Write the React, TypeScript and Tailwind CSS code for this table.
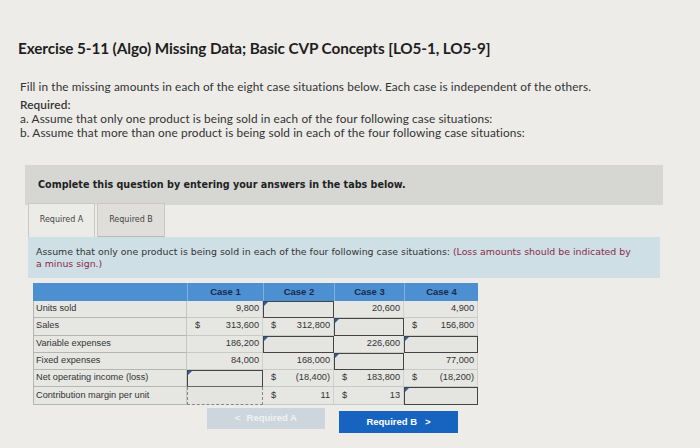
type Cell =
  | { kind: 'val'; v: string; d?: boolean }
  | { kind: 'in'; dotted?: 'top' | 'all' }

const ROWS: { label: string; cells: Cell[] }[] = [
  { label: 'Units sold', cells: [{ kind: 'val', v: '9,800' }, { kind: 'in' }, { kind: 'val', v: '20,600' }, { kind: 'val', v: '4,900' }] },
  { label: 'Sales', cells: [{ kind: 'val', v: '313,600', d: true }, { kind: 'val', v: '312,800', d: true }, { kind: 'in' }, { kind: 'val', v: '156,800', d: true }] },
  { label: 'Variable expenses', cells: [{ kind: 'val', v: '186,200' }, { kind: 'in' }, { kind: 'val', v: '226,600' }, { kind: 'in' }] },
  { label: 'Fixed expenses', cells: [{ kind: 'val', v: '84,000' }, { kind: 'val', v: '168,000' }, { kind: 'in' }, { kind: 'val', v: '77,000' }] },
  { label: 'Net operating income (loss)', cells: [{ kind: 'in', dotted: 'top' }, { kind: 'val', v: '(18,400)', d: true }, { kind: 'val', v: '183,800', d: true }, { kind: 'val', v: '(18,200)', d: true }] },
  { label: 'Contribution margin per unit', cells: [{ kind: 'in', dotted: 'all' }, { kind: 'val', v: '11', d: true }, { kind: 'val', v: '13', d: true }, { kind: 'in' }] },
]

const COLS = ['w-[76px]', 'w-[71px]', 'w-[70px]', 'w-[74px]']

function TableCell({ cell, w }: { cell: Cell; w: string }) {
  if (cell.kind === 'in') {
    const border =
      cell.dotted === 'top'
        ? 'border border-[#444] border-b-dashed border-b-[#666]'
        : cell.dotted === 'all'
          ? 'border border-dashed border-[#888] border-t-0'
          : 'border border-[#444]'
    return (
      <div className={`${w} h-[17.3px] relative bg-[#e4e4e1] ${border}`}>
        {cell.dotted !== 'all' && (
          <span className="absolute left-0 top-0 w-0 h-0 border-t-[4px] border-r-[4px] border-t-[#2a5fa8] border-r-transparent" />
        )}
      </div>
    )
  }
  return (
    <div className={`${w} h-[17.3px] flex items-center justify-between pl-[8px] pr-[3px] bg-[#e6e6e3] border-b border-[#c9c9c6] border-r border-r-[#d0d0cc]`}>
      <span>{cell.d ? '$' : ''}</span>
      <span>{cell.v}</span>
    </div>
  )
}

export default function App() {
  return (
    <div className="w-[700px] h-[448px] overflow-hidden bg-[#edece9] text-[#2a2a2a]" style={{ fontFamily: 'Lato, "Open Sans", sans-serif' }}>
      {/* Header */}
      <div className="pl-[18px] pt-[37px]">
        <h1 className="text-[15.3px] font-bold text-[#1e1e1e] tracking-[-0.1px]">
          Exercise 5-11 (Algo) Missing Data; Basic CVP Concepts [LO5-1, LO5-9]
        </h1>
      </div>

      <div className="pl-[20px] pt-[20px] text-[11.8px] leading-[14px] tracking-[0.1px] text-[#333]">
        <p>Fill in the missing amounts in each of the eight case situations below. Each case is independent of the others.</p>
        <p className="mt-[4px] font-semibold">Required:</p>
        <p>a. Assume that only one product is being sold in each of the four following case situations:</p>
        <p>b. Assume that more than one product is being sold in each of the four following case situations:</p>
      </div>

      {/* Instructions box */}
      <div className="ml-[25px] mt-[25px] w-[638px] h-[40px] bg-[#d6d6d3] flex items-center pl-[13px]">
        <span className="text-[9.6px] font-bold text-[#222]" style={{ fontFamily: '"DejaVu Sans", Verdana, sans-serif' }}>
          Complete this question by entering your answers in the tabs below.
        </span>
      </div>

      {/* Tabs */}
      <div className="ml-[28px] mt-[-2px] flex gap-[2px]" style={{ fontFamily: '"DejaVu Sans", Verdana, sans-serif' }}>
        <div className="w-[67px] h-[34px] bg-[#ebebe8] border border-[#c8c8c5] border-b-0 flex items-center justify-center text-[8px] text-[#444]">
          Required A
        </div>
        <div className="w-[68px] h-[34px] bg-[#dfdedb] border border-[#c8c8c5] border-b-[#b8b8b5] flex items-center justify-center text-[8px] text-[#444]">
          Required B
        </div>
      </div>

      {/* Info */}
      <div className="ml-[28px] w-[632px] h-[41px] bg-[#cfdfe6] pl-[8px] pt-[9px] text-[9.4px] leading-[12px] text-[#333]" style={{ fontFamily: '"DejaVu Sans", Verdana, sans-serif' }}>
        <div className="whitespace-nowrap">
          Assume that only one product is being sold in each of the four following case situations:{' '}
          <span className="text-[#8c2a48]">(Loss amounts should be indicated by</span>
        </div>
        <div className="text-[#8c2a48]">a minus sign.)</div>
      </div>

      {/* Table */}
      <div className="ml-[33px] mt-[5px] w-fit text-[9.2px] text-[#333]" style={{ fontFamily: '"Liberation Sans", Arial, sans-serif' }}>
        <div className="flex h-[18px] bg-[#4d90d2] text-[#1a2a4a] font-bold text-[9.5px]">
          <div className="w-[154px]" />
          {['Case 1', 'Case 2', 'Case 3', 'Case 4'].map((c, i) => (
            <div key={c} className={`${COLS[i]} flex items-center justify-center border-l border-[#7fb0e0]`}>{c}</div>
          ))}
        </div>
        {ROWS.map(r => (
          <div key={r.label} className="flex">
            <div className="w-[154px] h-[17.3px] flex items-center pl-[2px] bg-[#e6e6e3] border-l border-b border-[#b5b5b2] border-r border-r-[#c5c5c2]">
              {r.label}
            </div>
            {r.cells.map((c, i) => (
              <TableCell key={i} cell={c} w={COLS[i]} />
            ))}
          </div>
        ))}
      </div>

      {/* Nav buttons */}
      <div className="ml-[207px] mt-[3px] flex items-start gap-[14px] text-[9.5px] font-bold" style={{ fontFamily: '"Liberation Sans", Arial, sans-serif' }}>
        <div className="w-[118px] h-[21px] bg-[#cdd6dc] text-[#eef2f5] flex items-center justify-center gap-[6px]">
          <span>&lt;</span>
          <span>Required A</span>
        </div>
        <div className="mt-[3px] w-[119px] h-[22px] bg-[#1764c0] text-white flex items-center justify-center gap-[8px]">
          <span>Required B</span>
          <span>&gt;</span>
        </div>
      </div>
    </div>
  )
}
